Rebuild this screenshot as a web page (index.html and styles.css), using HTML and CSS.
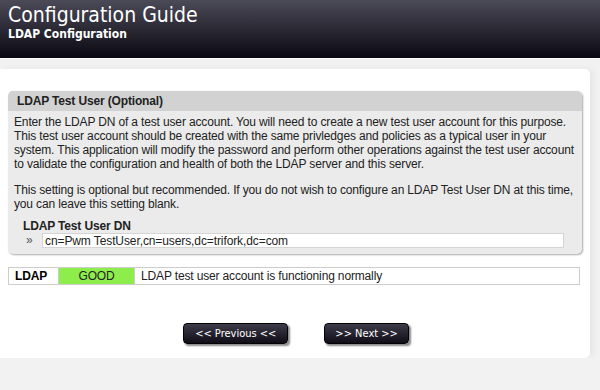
FILE: index.html
```html
<!DOCTYPE html>
<html lang="en">
<head>
	<meta charset="UTF-8">
	<title>Configuration Guide</title>
	<link rel="stylesheet" href="styles.css">
</head>
<body>
	<div id="header">
		<div class="title">Configuration Guide</div>
		<div class="subtitle">LDAP Configuration</div>
	</div>
	<div id="content">
		<div class="panel">
			<div class="panel-head">LDAP Test User (Optional)</div>
			<div class="panel-body">
				<p>Enter the LDAP DN of a test user account. You will need to create a new test user account for this purpose. This test user account should be created with the same privledges and policies as a typical user in your system. This application will modify the password and perform other operations against the test user account to validate the configuration and health of both the LDAP server and this server.</p>
				<p>This setting is optional but recommended. If you do not wish to configure an LDAP Test User DN at this time, you can leave this setting blank.</p>
				<div class="setting">
					<label>LDAP Test User DN</label>
					<div class="field"><span class="arrow">&raquo;</span><input type="text" value="cn=Pwm TestUser,cn=users,dc=trifork,dc=com"></div>
				</div>
			</div>
		</div>
		<table class="health">
			<tr>
				<td class="topic">LDAP</td>
				<td class="status">GOOD</td>
				<td class="msg">LDAP test user account is functioning normally</td>
			</tr>
		</table>
		<div class="buttons">
			<button class="btn btn-prev">&lt;&lt; Previous &lt;&lt;</button>
			<button class="btn btn-next">&gt;&gt; Next &gt;&gt;</button>
		</div>
	</div>
</body>
</html>
```

FILE: styles.css
```css
body {
	margin: 0;
	background: #f2f2f2;
	font-family: 'Liberation Sans', Arial, sans-serif;
	font-size: 12px;
	letter-spacing: -0.15px;
	color: #000;
}

/*页头*/
#header {
	height: 59px;
	padding-left: 8px;
	box-sizing: border-box;
	background: linear-gradient(#4b4a57, #0a0812);
	border-bottom: 1px solid #fff;
	color: #fff;
	font-family: 'DejaVu Sans Condensed', 'DejaVu Sans', sans-serif;
	letter-spacing: 0;
}
#header .title {
	font-size: 21px;
	line-height: 24px;
	padding-top: 3px;
}
#header .subtitle {
	font-size: 12px;
	font-weight: bold;
	line-height: 14px;
}

/*内容区*/
#content {
	width: 590px;
	height: 289px;
	margin-top: 10px;
	padding: 22px 8px 0 8px;
	box-sizing: border-box;
	background: #fff;
	border-radius: 0 5px 5px 0;
	box-shadow: 3px 0 6px #e4e4e4;
}

.panel {
	width: 574px;
	background: #ebebeb;
	border-radius: 5px;
	box-shadow: 1px 1px 2px #aaa;
}
.panel-head {
	height: 20px;
	padding-left: 9px;
	line-height: 20px;
	font-weight: bold;
	background: #d2d2d2;
	border-radius: 5px 5px 0 0;
	color: #222;
}
.panel-body {
	padding: 4px 2px 6px 6px;
	color: #222;
}
.panel-body p {
	margin: 0 0 12px 0;
	line-height: 14px;
}
.setting label {
	display: block;
	margin: -4px 0 0 9px;
	font-weight: bold;
	line-height: 14px;
}
.field {
	display: flex;
	align-items: center;
	margin: 0 16px 0 12px;
}
.arrow {
	width: 16px;
	color: #555;
	line-height: 15px;
}
.field input {
	flex: 1;
	height: 15px;
	box-sizing: border-box;
	padding: 0 0 0 2px;
	border: 1px solid #d4d4d4;
	font-family: 'Liberation Sans', Arial, sans-serif;
	font-size: 12px;
	letter-spacing: -0.1px;
	color: #222;
	background: #fff;
}

/*健康状态*/
.health {
	width: 572px;
	margin-top: 13px;
	border-collapse: collapse;
	border: 1px solid #ccc;
}
.health td {
	height: 16px;
	padding: 0 6px;
	border: 1px solid #ccc;
	line-height: 16px;
}
.health .topic {
	width: 37px;
	font-weight: bold;
}
.health .status {
	width: 63px;
	text-align: center;
	background: #8ced4b;
	color: #222;
}
.health .msg {
	color: #222;
}

/*按钮*/
.buttons {
	display: flex;
	justify-content: center;
	gap: 36px;
	margin: 38px 0 0 2px;
}
.btn {
	height: 21px;
	padding: 0 11px;
	border: 1px solid #000;
	border-radius: 4px;
	background: linear-gradient(#3e3b4a, #100d18);
	box-shadow: 2px 2px 2px #888;
	color: #fff;
	font-family: 'DejaVu Sans Condensed', 'DejaVu Sans', sans-serif;
	font-size: 11px;
	letter-spacing: 0;
	cursor: pointer;
}
.btn-next {
	padding: 0 10px;
}
```
